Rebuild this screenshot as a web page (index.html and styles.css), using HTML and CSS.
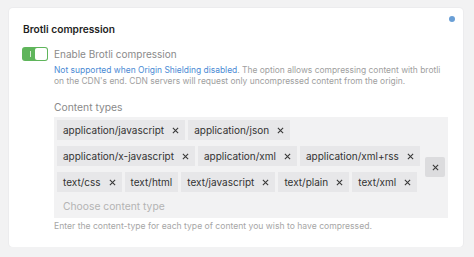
FILE: index.html
```html
<!DOCTYPE html>
<html lang="en">
<head>
    <meta charset="UTF-8">
    <meta name="viewport" content="width=device-width, initial-scale=1.0">
    <title>Brotli compression</title>
    <link rel="stylesheet" href="styles.css">
</head>
<body>
    <div class="card">
        <span class="status-dot"></span>
        <h2 class="card-title">Brotli compression</h2>

        <div class="option-row">
            <label class="switch">
                <span class="switch-mark"></span>
                <span class="switch-knob"></span>
            </label>
            <span class="option-label">Enable Brotli compression</span>
        </div>

        <div class="option-body">
            <p class="description">
                <a href="#" class="link">Not supported when Origin Shielding disabled</a>. The option allows compressing content with brotli on the CDN's end. CDN servers will request only uncompressed content from the origin.
            </p>

            <div class="field-label">Content types</div>
            <div class="tag-input">
                <div class="tags">
                    <span class="tag">application/javascript <svg class="x-icon" viewBox="0 0 8 8"><path d="M1 1L7 7M7 1L1 7"/></svg></span>
                    <span class="tag">application/json <svg class="x-icon" viewBox="0 0 8 8"><path d="M1 1L7 7M7 1L1 7"/></svg></span>
                    <span class="tag">application/x-javascript <svg class="x-icon" viewBox="0 0 8 8"><path d="M1 1L7 7M7 1L1 7"/></svg></span>
                    <span class="tag">application/xml <svg class="x-icon" viewBox="0 0 8 8"><path d="M1 1L7 7M7 1L1 7"/></svg></span>
                    <span class="tag">application/xml+rss <svg class="x-icon" viewBox="0 0 8 8"><path d="M1 1L7 7M7 1L1 7"/></svg></span>
                    <span class="tag">text/css <svg class="x-icon" viewBox="0 0 8 8"><path d="M1 1L7 7M7 1L1 7"/></svg></span>
                    <span class="tag">text/html</span>
                    <span class="tag">text/javascript <svg class="x-icon" viewBox="0 0 8 8"><path d="M1 1L7 7M7 1L1 7"/></svg></span>
                    <span class="tag">text/plain <svg class="x-icon" viewBox="0 0 8 8"><path d="M1 1L7 7M7 1L1 7"/></svg></span>
                    <span class="tag">text/xml <svg class="x-icon" viewBox="0 0 8 8"><path d="M1 1L7 7M7 1L1 7"/></svg></span>
                    <span class="placeholder">Choose content type</span>
                </div>
                <button class="clear-button"><svg class="x-icon" viewBox="0 0 8 8"><path d="M1 1L7 7M7 1L1 7"/></svg></button>
            </div>
            <p class="help-text">Enter the content-type for each type of content you wish to have compressed.</p>
        </div>
    </div>
</body>
</html>
```
FILE: styles.css
```css
/* Basic reset */
* {
    margin: 0;
    padding: 0;
    box-sizing: border-box;
    font-family: Inter, "Noto Sans", sans-serif;
}

body {
    background-color: #f2f2f3;
    color: #222;
}

/* Card */
.card {
    position: relative;
    margin: 8px 11px 0 9px;
    padding: 14px 15px 16px 14px;
    background-color: #fff;
    border-radius: 4px;
    box-shadow: 0 0 0 1px #ececee;
}

.status-dot {
    position: absolute;
    top: 8px;
    right: 8px;
    width: 6px;
    height: 6px;
    border-radius: 50%;
    background-color: #6a9fd6;
}

.card-title {
    font-size: 10.2px;
    font-weight: 600;
    line-height: 14px;
    color: #1f1f1f;
}

/* Toggle row */
.option-row {
    display: flex;
    align-items: center;
    gap: 6px;
    margin-top: 11px;
    margin-left: -1px;
}

.switch {
    position: relative;
    display: flex;
    width: 26px;
    height: 14px;
    background-color: #5fb55b;
    border-radius: 3px;
}

.switch-mark {
    position: absolute;
    left: 8px;
    top: 4px;
    width: 1px;
    height: 6px;
    background-color: rgba(255, 255, 255, 0.75);
}

.switch-knob {
    position: absolute;
    right: 1px;
    top: 1px;
    width: 12px;
    height: 12px;
    background-color: #fff;
    border-radius: 2px;
}

.option-label {
    font-size: 10px;
    color: #8a8a8a;
    line-height: 14px;
}

/* Body under the toggle */
.option-body {
    padding-left: 31px;
}

.description {
    margin-top: 4px;
    font-size: 8.45px;
    line-height: 11px;
    color: #a0a0a0;
}

.link {
    color: #4a8ad4;
    text-decoration: none;
}

.field-label {
    margin-top: 13px;
    font-size: 10.3px;
    line-height: 14px;
    color: #8a8a8a;
}

/* Tag input */
.tag-input {
    display: flex;
    align-items: center;
    margin-top: 3px;
    padding: 3px 3px 4px 3px;
    background-color: #f2f2f3;
}

.tags {
    flex: 1;
    display: flex;
    flex-wrap: wrap;
    gap: 6px 3px;
}

.tag {
    display: inline-flex;
    align-items: center;
    gap: 8px;
    height: 20px;
    padding: 0 6px;
    background-color: #e7e7e9;
    font-size: 10px;
    color: #333;
}

.x-icon {
    width: 7px;
    height: 7px;
    fill: none;
    stroke: #3a3a3a;
    stroke-width: 1.25;
}

.placeholder {
    flex-basis: 100%;
    height: 16px;
    line-height: 16px;
    padding-left: 6px;
    font-size: 10.3px;
    color: #b4b4b4;
}

.clear-button {
    display: flex;
    align-items: center;
    justify-content: center;
    width: 20px;
    height: 20px;
    margin-left: 2px;
    border: none;
    border-radius: 2px;
    background-color: #dcdcde;
}

.help-text {
    margin-top: 3px;
    font-size: 8.6px;
    line-height: 10px;
    color: #a6a6a6;
}
```
